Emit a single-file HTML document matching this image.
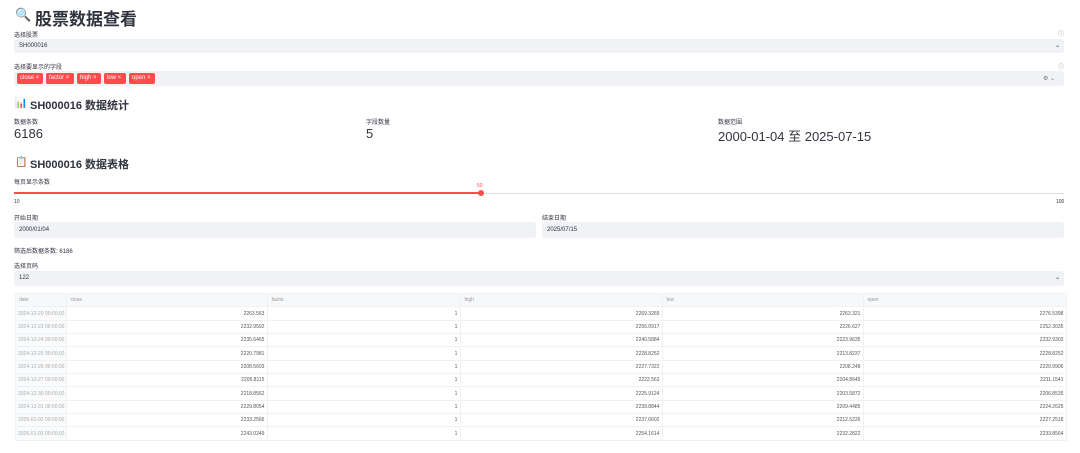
<!DOCTYPE html>
<html><head><meta charset="utf-8"><style>
*{margin:0;padding:0;box-sizing:border-box}
body{width:1080px;height:453px;background:#fff;font-family:"Liberation Sans","Noto Sans CJK SC",sans-serif;color:#31333f;position:relative;overflow:hidden}
.a{position:absolute;white-space:nowrap}
.lbl{font-size:6px;color:#31333f}
.box{position:absolute;background:#f0f2f6;border-radius:3px}
.tag{position:absolute;top:73px;height:11px;background:#ff4b4b;color:#fff;font-size:6px;line-height:11px;padding-left:3px;border-radius:2px;white-space:nowrap}
.h2{font-size:11px;font-weight:bold}
.met{font-size:13px;color:#31333f}
table{position:absolute;left:15px;top:293px;border-collapse:collapse;font-size:5px;color:#555;table-layout:fixed}
td,th{height:13.35px;border:1px solid #f0f1f4;padding:0 3px;font-weight:normal;white-space:nowrap;overflow:hidden}
th{background:#f7f8fa;text-align:left;color:#999}
td{text-align:right}
td:first-child{text-align:left;color:#aaa;background:#fafbfc;padding:0 2px}
</style></head><body>
<div class="a" style="left:15px;top:7px;font-size:13px">🔍</div>
<div class="a" style="left:35px;top:5px;font-size:17px;font-weight:bold">股票数据查看</div>
<div class="a lbl" style="left:14px;top:30px">选择股票</div>
<div class="a" style="left:1058px;top:29px;font-size:6px;color:#888">ⓘ</div>
<div class="box" style="left:14px;top:39px;width:1050px;height:14px"></div>
<div class="a" style="left:19px;top:43px;font-size:6px">SH000016</div>
<div class="a" style="left:1055px;top:42px;font-size:6px">⌄</div>
<div class="a lbl" style="left:14px;top:62px">选择要显示的字段</div>
<div class="a" style="left:1058px;top:62px;font-size:6px;color:#888">ⓘ</div>
<div class="box" style="left:14px;top:71px;width:1050px;height:15px"></div>
<div class="tag" style="left:17px;width:26px">close ×</div>
<div class="tag" style="left:46px;width:28px">factor ×</div>
<div class="tag" style="left:77px;width:24px">high ×</div>
<div class="tag" style="left:104px;width:22px">low ×</div>
<div class="tag" style="left:129px;width:26px">open ×</div>
<div class="a" style="left:1043px;top:75px;font-size:6px;color:#777">⚙ ⌄</div>
<div class="a" style="left:15px;top:98px;font-size:10px">📊</div>
<div class="a h2" style="left:30px;top:97px">SH000016 数据统计</div>
<div class="a lbl" style="left:14px;top:117px">数据条数</div>
<div class="a met" style="left:14px;top:126px">6186</div>
<div class="a lbl" style="left:366px;top:117px">字段数量</div>
<div class="a met" style="left:366px;top:126px">5</div>
<div class="a lbl" style="left:718px;top:117px">数据范围</div>
<div class="a met" style="left:718px;top:126px">2000-01-04 至 2025-07-15</div>
<div class="a" style="left:15px;top:157px;font-size:10px">📋</div>
<div class="a h2" style="left:30px;top:156px">SH000016 数据表格</div>
<div class="a lbl" style="left:14px;top:177px">每页显示条数</div>
<div class="a" style="left:14px;top:192px;width:467px;height:2px;background:#ff4b4b"></div>
<div class="a" style="left:481px;top:192.5px;width:583px;height:1px;background:#ddd"></div>
<div class="a" style="left:478px;top:190px;width:6px;height:6px;border-radius:50%;background:#ff4b4b"></div>
<div class="a" style="left:477px;top:183px;font-size:5px;color:#ff4b4b">50</div>
<div class="a" style="left:14px;top:199px;font-size:5px">10</div>
<div class="a" style="left:1056px;top:199px;font-size:5px">100</div>
<div class="a lbl" style="left:14px;top:213px">开始日期</div>
<div class="box" style="left:14px;top:222px;width:522px;height:16px"></div>
<div class="a" style="left:19px;top:227px;font-size:6px">2000/01/04</div>
<div class="a lbl" style="left:542px;top:213px">结束日期</div>
<div class="box" style="left:542px;top:222px;width:522px;height:16px"></div>
<div class="a" style="left:547px;top:227px;font-size:6px">2025/07/15</div>
<div class="a lbl" style="left:14px;top:246px">筛选后数据条数: 6186</div>
<div class="a lbl" style="left:14px;top:261px">选择页码</div>
<div class="box" style="left:14px;top:271px;width:1050px;height:15px"></div>
<div class="a" style="left:19px;top:275px;font-size:6px">122</div>
<div class="a" style="left:1055px;top:274px;font-size:6px">⌄</div>
<table>
<colgroup><col style="width:49px"><col style="width:201px"><col style="width:193px"><col style="width:202px"><col style="width:201px"><col style="width:203px"></colgroup>
<tr><th>date</th><th>close</th><th>factor</th><th>high</th><th>low</th><th>open</th></tr>
<tr><td>2024-12-20 00:00:00</td><td>2263.563</td><td>1</td><td>2269.3265</td><td>2263.321</td><td>2276.5398</td></tr>
<tr><td>2024-12-23 00:00:00</td><td>2232.9592</td><td>1</td><td>2256.0917</td><td>2226.627</td><td>2252.3035</td></tr>
<tr><td>2024-12-24 00:00:00</td><td>2235.6465</td><td>1</td><td>2240.5884</td><td>2223.9635</td><td>2232.9303</td></tr>
<tr><td>2024-12-25 00:00:00</td><td>2220.7981</td><td>1</td><td>2228.8252</td><td>2213.8237</td><td>2228.8252</td></tr>
<tr><td>2024-12-26 00:00:00</td><td>2208.5603</td><td>1</td><td>2227.7322</td><td>2208.248</td><td>2220.9906</td></tr>
<tr><td>2024-12-27 00:00:00</td><td>2205.8115</td><td>1</td><td>2222.563</td><td>2204.8645</td><td>2211.1541</td></tr>
<tr><td>2024-12-30 00:00:00</td><td>2218.8562</td><td>1</td><td>2225.9124</td><td>2203.5872</td><td>2206.8535</td></tr>
<tr><td>2024-12-31 00:00:00</td><td>2229.8054</td><td>1</td><td>2239.8844</td><td>2209.4485</td><td>2224.2625</td></tr>
<tr><td>2025-01-02 00:00:00</td><td>2233.2566</td><td>1</td><td>2237.6602</td><td>2212.5226</td><td>2227.2518</td></tr>
<tr><td>2025-01-03 00:00:00</td><td>2243.0249</td><td>1</td><td>2254.1614</td><td>2232.2822</td><td>2233.8564</td></tr>
</table>
</body></html>
